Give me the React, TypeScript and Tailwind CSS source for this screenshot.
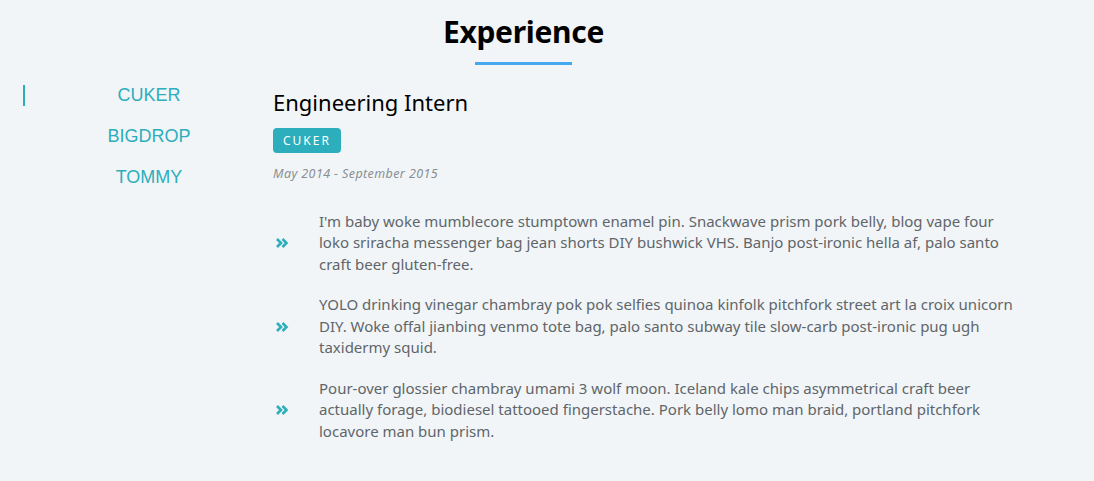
const COMPANIES = ['CUKER', 'BIGDROP', 'TOMMY'];

const DUTIES = [
  "I'm baby woke mumblecore stumptown enamel pin. Snackwave prism pork belly, blog vape four loko sriracha messenger bag jean shorts DIY bushwick VHS. Banjo post-ironic hella af, palo santo craft beer gluten-free.",
  'YOLO drinking vinegar chambray pok pok selfies quinoa kinfolk pitchfork street art la croix unicorn DIY. Woke offal jianbing venmo tote bag, palo santo subway tile slow-carb post-ironic pug ugh taxidermy squid.',
  'Pour-over glossier chambray umami 3 wolf moon. Iceland kale chips asymmetrical craft beer actually forage, biodiesel tattooed fingerstache. Pork belly lomo man braid, portland pitchfork locavore man bun prism.',
];

function DoubleAngle() {
  return (
    <svg width="14" height="12" viewBox="0 0 14 12" className="shrink-0 text-[#2caebd]">
      <path d="M2 2l4 4-4 4M7.5 2l4 4-4 4" fill="none" stroke="currentColor" strokeWidth="2.6" strokeLinejoin="miter" />
    </svg>
  );
}

export default function App() {
  return (
    <div className="min-h-[481px] bg-[#f1f5f8] font-['Noto_Sans',sans-serif] text-[#000]">
      <div className="flex flex-col items-center pt-[13px] pr-[47px]">
        <h2 className="text-[30px] leading-[38px] font-bold tracking-[-0.3px]">Experience</h2>
        <div className="mt-[11px] h-[3px] w-[97px] bg-[#45a8ee]"></div>
      </div>

      <div className="flex mt-[20px]">
        <div className="w-[273px] shrink-0 flex flex-col -mt-[10px]">
          {COMPANIES.map((c, i) => (
            <div key={c} className="flex items-center h-[41px]">
              <span className={`ml-[23px] w-[2px] h-[21px] ${i === 0 ? 'bg-[#2caebd]' : 'bg-transparent'}`}></span>
              <span className="w-[250px] text-center font-['Liberation_Sans',sans-serif] text-[18px] text-[#2caebd]">
                {c}
              </span>
            </div>
          ))}
        </div>

        <div className="flex-1 pt-[2px]">
          <h3 className="text-[22px] leading-[30px] text-[#000]">Engineering Intern</h3>
          <div className="mt-[11px] inline-flex items-center h-[25px] px-[10px] rounded-[4px] bg-[#2caebd] text-white text-[12px] tracking-[2px]">
            CUKER
          </div>
          <p className="mt-[12px] text-[12.5px] italic text-[#8a8f94] tracking-[0.4px]">May 2014 - September 2015</p>

          <div className="mt-[27px] flex flex-col gap-[19px]">
            {DUTIES.map((d, i) => (
              <div key={i} className="flex items-center">
                <span className="ml-[2px] flex"><DoubleAngle /></span>
                <p className="ml-[30px] w-[702px] text-[15px] leading-[21.5px] text-[#606569]">{d}</p>
              </div>
            ))}
          </div>
        </div>
      </div>
    </div>
  );
}
